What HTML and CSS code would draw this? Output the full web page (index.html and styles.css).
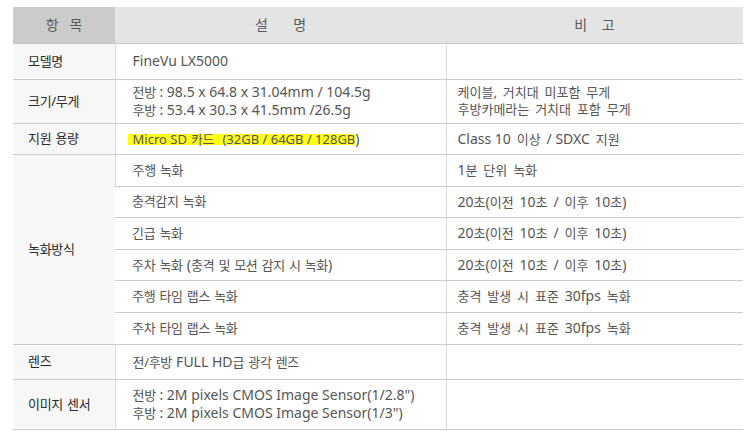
FILE: index.html
```html
<!DOCTYPE html>
<html lang="ko">
<head>
<meta charset="utf-8">
<link rel="stylesheet" href="styles.css">
</head>
<body>
<div class="wrap">
<table class="spec">
  <colgroup><col class="c1"><col class="c2"><col class="c3"></colgroup>
  <thead>
    <tr class="h-head">
      <th class="th-item">항&nbsp;&nbsp;&nbsp;목</th>
      <th>설&nbsp;&nbsp;&nbsp;&nbsp;&nbsp;&nbsp;&nbsp;명</th>
      <th>비&nbsp;&nbsp;&nbsp;&nbsp;고</th>
    </tr>
  </thead>
  <tbody>
    <tr class="h-36"><th>모델명</th><td><span class="en">FineVu LX5000</span></td><td></td></tr>
    <tr class="h-44"><th>크기/무게</th><td>전방<span class="en"> : 98.5 x 64.8 x 31.04mm / 104.5g</span><br>후방<span class="en"> : 53.4 x 30.3 x 41.5mm /26.5g</span></td><td>케이블, 거치대 미포함 무게<br>후방카메라는 거치대 포함 무게</td></tr>
    <tr class="h-31"><th>지원 용량</th><td><span class="hl"><span class="en">Micro SD</span> 카드&nbsp; <span class="en">(32GB / 64GB / 128GB</span></span><span class="en">)</span></td><td><span class="en">Class 10</span> 이상 <span class="en">/ SDXC</span> 지원</td></tr>
    <tr class="h-32"><th rowspan="6">녹화방식</th><td>주행 녹화</td><td><span class="en">1</span>분 단위 녹화</td></tr>
    <tr class="h-31"><td>충격감지 녹화</td><td><span class="en">20</span>초<span class="en">(</span>이전 <span class="en">10</span>초 <span class="en">/</span> 이후 <span class="en">10</span>초<span class="en">)</span></td></tr>
    <tr class="h-32"><td>긴급 녹화</td><td><span class="en">20</span>초<span class="en">(</span>이전 <span class="en">10</span>초 <span class="en">/</span> 이후 <span class="en">10</span>초<span class="en">)</span></td></tr>
    <tr class="h-31"><td>주차 녹화 <span class="en">(</span>충격 및 모션 감지 시 녹화<span class="en">)</span></td><td><span class="en">20</span>초<span class="en">(</span>이전 <span class="en">10</span>초 <span class="en">/</span> 이후 <span class="en">10</span>초<span class="en">)</span></td></tr>
    <tr class="h-32"><td>주행 타임 랩스 녹화</td><td>충격 발생 시 표준 <span class="en">30fps</span> 녹화</td></tr>
    <tr class="h-32"><td>주차 타임 랩스 녹화</td><td>충격 발생 시 표준 <span class="en">30fps</span> 녹화</td></tr>
    <tr class="h-35"><th>렌즈</th><td>전/후방 <span class="en">FULL HD</span>급 광각 렌즈</td><td></td></tr>
    <tr class="h-50"><th>이미지 센서</th><td>전방<span class="en"> : 2M pixels CMOS Image Sensor(1/2.8")</span><br>후방<span class="en"> : 2M pixels CMOS Image Sensor(1/3")</span></td><td></td></tr>
  </tbody>
</table>
</div>
</body>
</html>
```
FILE: styles.css
```css
html, body {
  margin: 0;
  padding: 0;
  background: #ffffff;
}
.wrap {
  padding: 7px 7px 0 13px;
}
.spec {
  width: 730px;
  border-collapse: collapse;
  table-layout: fixed;
  font-family: "Noto Sans", "Noto Sans CJK KR", sans-serif;
  font-size: 13px;
  letter-spacing: -0.3px;
  word-spacing: 1px;
  color: #555;
}
.c1 { width: 102px; }
.c2 { width: 331px; }
.c3 { width: 297px; }
.spec th, .spec td {
  border-bottom: 1px solid #cccccc;
  border-left: 1px solid #dcdcdc;
  padding: 0;
  line-height: 17px;
  vertical-align: middle;
  text-align: left;
  font-weight: normal;
}
.spec tr > :first-child { border-left: none; }
.spec thead th {
  background: #e4e4e4;
  text-align: center;
  font-size: 14px;
  letter-spacing: 0;
  word-spacing: 0;
  color: #5a5a5a;
  border-left: none;
  border-bottom: 1px solid #c8c8c8;
}
.spec thead th.th-item { background: #cbcbcb; }
.spec tbody th {
  background: #f7f7f7;
  color: #2a2a2a;
  padding-left: 15px;
}
.spec tbody td { padding-left: 17px; }
.spec tbody td + td {
  padding-left: 11px;
  letter-spacing: 0;
  word-spacing: 2.5px;
}
.en {
  font-size: 14px;
  letter-spacing: 0;
  word-spacing: 0;
}
.hl .en { font-size: 13px; }
.h-head { height: 36px; }
.h-36 { height: 36px; }
.h-44 { height: 44px; }
.h-31 { height: 31px; }
.h-32 { height: 32px; }
.h-35 { height: 35px; }
.h-50 { height: 50px; }
.hl {
  margin-left: -5px;
  padding-left: 5px;
  background: linear-gradient(to bottom, transparent 20%, #ffff1a 20%, #ffff1a 84%, transparent 84%);
}
```
